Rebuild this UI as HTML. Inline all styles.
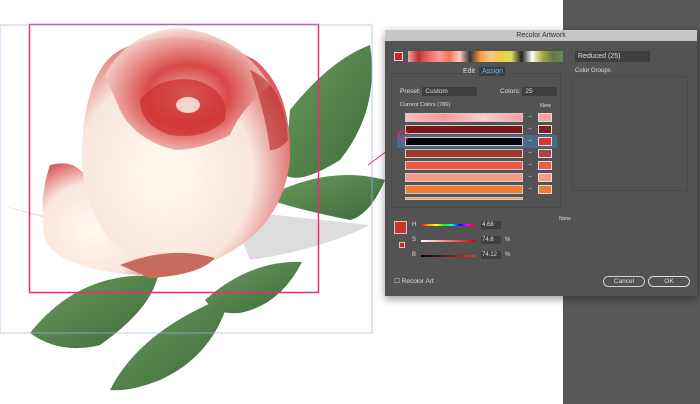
<!DOCTYPE html>
<html><head><meta charset="utf-8"><style>
*{margin:0;padding:0;box-sizing:border-box}
body{width:700px;height:404px;overflow:hidden;background:#fff;position:relative;font-family:"Liberation Sans",sans-serif;font-size:6px;color:#ddd}
.a{position:absolute}
.bar{position:absolute;left:20px;width:118px;height:9px;border:1px solid #ccc}
.nw{position:absolute;left:153px;width:14px;height:9px;border:1px solid #ddd}
.arr{position:absolute;left:142px;color:#eee;font-size:6px}
</style></head><body>
<div class="a" style="left:563px;top:0;width:137px;height:404px;background:#585858"></div>
<svg class="a" style="left:0;top:0" width="390" height="404">
<defs>
<radialGradient id="p" cx="40%" cy="60%" r="65%"><stop offset="0" stop-color="#fffaf0"/><stop offset=".65" stop-color="#f9e6dc"/><stop offset="1" stop-color="#d86060"/></radialGradient>
<radialGradient id="c" cx="50%" cy="55%" r="55%"><stop offset="0" stop-color="#e8b0a8"/><stop offset=".45" stop-color="#d63a3a"/><stop offset="1" stop-color="#f6dcd4"/></radialGradient>
<linearGradient id="l" x1="0" y1="0" x2="1" y2="1"><stop offset="0" stop-color="#6a9a5e"/><stop offset="1" stop-color="#3e6b3a"/></linearGradient>
</defs>
<path d="M0 205 L60 220 L120 240 Z" fill="#ddd"/>
<path d="M230 210 Q320 220 370 225 Q320 250 250 260 Z" fill="#ddd"/>
<path d="M290 110 Q330 60 370 45 Q380 110 340 160 Q300 185 285 175 Z" fill="url(#l)"/>
<path d="M270 195 Q330 165 385 180 Q370 215 350 220 Q300 210 270 200 Z" fill="url(#l)"/>
<path d="M30 333 Q80 270 158 276 Q150 310 100 345 Q60 355 30 333 Z" fill="url(#l)"/>
<path d="M205 300 Q250 260 302 262 Q280 305 240 313 Q215 315 205 300 Z" fill="url(#l)"/>
<path d="M110 390 Q140 330 230 295 Q215 355 160 380 Q130 392 110 390 Z" fill="url(#l)"/>
<path d="M50 165 Q70 160 80 170 L170 240 L140 275 Q60 270 45 240 Q38 200 50 165Z" fill="url(#p)"/>
<path d="M82 150 Q85 70 120 50 Q180 20 255 60 Q292 90 290 160 Q282 230 215 260 Q150 275 110 240 Q80 200 82 150Z" fill="url(#p)"/>
<path d="M105 75 Q130 30 180 28 Q240 35 270 85 Q240 110 230 135 Q200 150 175 150 Q135 140 120 110 Z" fill="url(#c)" opacity=".9"/>
<path d="M140 100 Q160 75 195 80 Q230 90 225 120 Q205 140 170 135 Q140 125 140 100Z" fill="#cf3232" opacity=".75"/>
<ellipse cx="188" cy="105" rx="12" ry="8" fill="#f3d5cc"/>
<path d="M250 70 Q285 85 288 140 Q280 150 270 150 Q265 110 250 70Z" fill="#b82828" opacity=".6"/>
<path d="M120 265 Q170 245 215 258 Q200 275 150 278Z" fill="#c96a5e"/>
<rect x="29.5" y="24.5" width="289" height="268" fill="none" stroke="#ee2a7b" stroke-width="1.5"/>
<rect x="0" y="25" width="372" height="308" fill="none" stroke="#a0b4ff" stroke-width=".7"/>
<line x1="368" y1="165" x2="402" y2="140" stroke="#ee2a7b" stroke-width="1"/>
</svg>
<div class="a" style="left:385px;top:30px;width:312px;height:266px;background:#535353;box-shadow:0 3px 8px rgba(0,0,0,.4)">
<div class="a" style="left:0;top:0;width:312px;height:11px;background:#c7c7c7;color:#333;text-align:center;font-size:7px;line-height:11px">Recolor Artwork</div>
<div class="a" style="left:9px;top:22px;width:9px;height:9px;background:#c22;border:1px solid #ddd"></div>
<div class="a" style="left:23px;top:21px;width:155px;height:11px;background:linear-gradient(90deg,#f4a0a0,#b33,#e66,#f99,#e75,#fcb,#333,#f94,#ec8,#ec4,#dd5,#222,#ffe,#aa4,#674,#685)"></div>
<div class="a" style="left:190px;top:21px;width:75px;height:11px;background:#3f3f3f;font-size:7px;padding:2px 3px">Reduced (25)</div>
<div class="a" style="left:78px;top:38px;width:30px;height:9px;font-size:7px">Edit</div>
<div class="a" style="left:94px;top:37px;width:26px;height:9px;background:#3a3a3a;color:#5ac8ff;font-size:7px;padding:1px 3px">Assign</div>
<div class="a" style="left:6px;top:43px;width:170px;height:135px;border:1px solid #4a4a4a"></div>
<div class="a" style="left:187px;top:46px;width:116px;height:115px;border:1px solid #4a4a4a"></div>
<div class="a" style="left:190px;top:38px;font-size:6px">Color Groups</div>
<div class="a" style="left:15px;top:57px;font-size:6.5px">Preset: <span style="background:#3f3f3f;padding:1px 3px;display:inline-block;width:55px">Custom</span></div>
<div class="a" style="left:115px;top:57px;font-size:6.5px">Colors: <span style="background:#3f3f3f;padding:1px 3px;display:inline-block;width:35px">25</span></div>
<div class="a" style="left:15px;top:72px;font-size:5.5px">Current Colors (786)</div>
<div class="a" style="left:155px;top:73px;font-size:5.5px">New</div>
<div class="a" style="left:0;top:80px;width:180px;height:90px">
<div class="bar" style="top:3px;background:linear-gradient(90deg,#fbb,#f99,#fcc,#f9a)"></div><div class="arr" style="top:3px">→</div><div class="nw" style="top:3px;background:#f9a0a0"></div>
<div class="bar" style="top:15px;background:#7a1818"></div><div class="arr" style="top:15px">→</div><div class="nw" style="top:15px;background:#7a2020"></div>
<div class="a" style="left:12px;top:25px;width:160px;height:13px;background:#4a6a8a"></div>
<div class="bar" style="top:27px;background:#000"></div><div class="arr" style="top:27px">→</div><div class="nw" style="top:27px;background:#d33"></div>
<div class="bar" style="top:39px;background:#9a3a30"></div><div class="arr" style="top:39px">→</div><div class="nw" style="top:39px;background:#a44"></div>
<div class="bar" style="top:51px;background:#f0553f"></div><div class="arr" style="top:51px">→</div><div class="nw" style="top:51px;background:#f05a48"></div>
<div class="bar" style="top:63px;background:#f39a80"></div><div class="arr" style="top:63px">→</div><div class="nw" style="top:63px;background:#f49b88"></div>
<div class="bar" style="top:75px;background:#f07a30"></div><div class="arr" style="top:75px">→</div><div class="nw" style="top:75px;background:#f07a30"></div>
<div class="bar" style="top:87px;height:3px;background:#f49050"></div>
</div>
<div class="a" style="left:13px;top:100px;width:11px;height:11px;border:1.5px solid #ee2a7b;border-radius:50%"></div>
<div class="a" style="left:9px;top:191px;width:13px;height:13px;background:#c33;border:1px solid #ccc"></div>
<div class="a" style="left:14px;top:212px;width:6px;height:6px;background:#d22;border:1px solid #ccc"></div>
<div class="a" style="left:27px;top:192px;font-size:6px">H</div><div class="a" style="left:36px;top:194px;width:54px;height:2px;background:linear-gradient(90deg,red,orange,yellow,lime,cyan,blue,magenta,red)"></div>
<div class="a" style="left:27px;top:207px;font-size:6px">S</div><div class="a" style="left:36px;top:210px;width:54px;height:2px;background:linear-gradient(90deg,#fff,#d00)"></div>
<div class="a" style="left:27px;top:222px;font-size:6px">B</div><div class="a" style="left:36px;top:225px;width:54px;height:2px;background:linear-gradient(90deg,#000,#e33)"></div>
<div class="a" style="left:96px;top:191px;width:20px;height:8px;background:#3f3f3f;font-size:6px;padding:1px">4.68</div>
<div class="a" style="left:96px;top:206px;width:20px;height:8px;background:#3f3f3f;font-size:6px;padding:1px">74.6</div><div class="a" style="left:120px;top:207px">%</div>
<div class="a" style="left:96px;top:221px;width:20px;height:8px;background:#3f3f3f;font-size:6px;padding:1px">74.12</div><div class="a" style="left:120px;top:222px">%</div>
<div class="a" style="left:174px;top:186px;font-size:5px">None</div>
<div class="a" style="left:9px;top:247px;font-size:6.5px">☐ Recolor Art</div>
<div class="a" style="left:218px;top:246px;width:42px;height:11px;border:1px solid #ccc;border-radius:6px;text-align:center;font-size:6.5px;line-height:9px">Cancel</div>
<div class="a" style="left:263px;top:246px;width:42px;height:11px;border:1.5px solid #ddd;border-radius:6px;text-align:center;font-size:6.5px;line-height:9px">OK</div>
</div>
</body></html>
